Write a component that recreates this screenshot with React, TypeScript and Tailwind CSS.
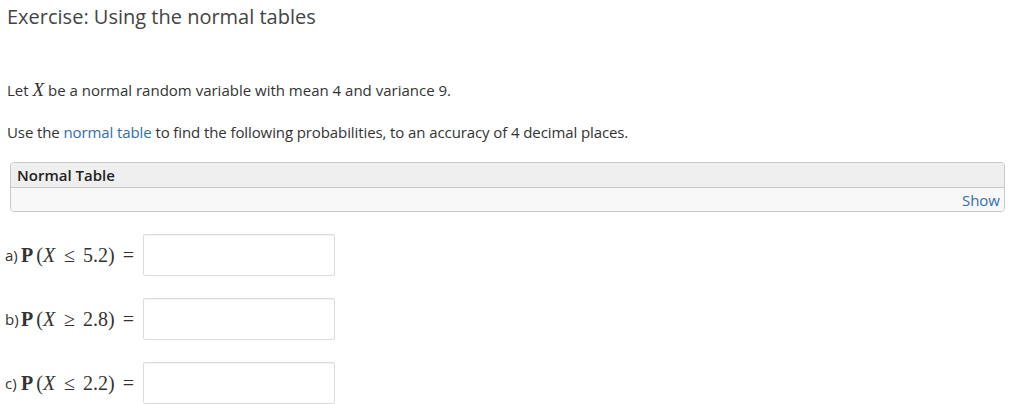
const questions = [
  { label: "a)", rel: "≤", value: "5.2" },
  { label: "b)", rel: "≥", value: "2.8" },
  { label: "c)", rel: "≤", value: "2.2" },
];

const Math = ({ rel, value }: { rel: string; value: string }) => (
  <span className="font-['Liberation_Serif',serif] text-[20px] text-[#333] whitespace-nowrap">
    <b className="mr-[3px]">P</b>(<i className="mr-[1px]">X</i>
    <span className="mx-[8px]">{rel}</span>
    {value})<span className="ml-[8px]">=</span>
  </span>
);

export default function App() {
  return (
    <div className="font-['Open_Sans',sans-serif] text-[15px] leading-[20px] text-[#333] bg-white min-h-[404px] pl-[7px] pr-[19px]">
      <h1 className="pt-[3px] text-[20px] leading-[28px] text-[#444]">Exercise: Using the normal tables</h1>

      <p className="mt-[49px]">
        Let <i className="font-['Liberation_Serif',serif] text-[19px]">X</i> be a normal random variable with mean 4 and variance 9.
      </p>
      <p className="mt-[22px] tracking-[-0.1px]">
        Use the <a className="text-[#2f6fad]">normal table</a> to find the following probabilities, to an accuracy of 4 decimal places.
      </p>

      <div className="mt-[20px] ml-[3px] border border-[#c8c8c8] rounded-[4px] overflow-hidden">
        <div className="bg-[#efefef] border-b border-[#c8c8c8] h-[25px] px-[6px] flex items-center text-[15px] font-semibold text-[#222]">
          Normal Table
        </div>
        <div className="bg-[#f8f8f8] h-[23px] px-[4px] flex items-center justify-end text-[#2f6fad]">Show</div>
      </div>

      <div className="mt-[22px] -ml-[2px] flex flex-col gap-[22px]">
        {questions.map((q) => (
          <div key={q.label} className="flex items-center">
            <span className="w-[16px]">{q.label}</span>
            <Math rel={q.rel} value={q.value} />
            <div className="ml-[9px] w-[192px] h-[42px] border border-[#dcdcdc] rounded-[2px] bg-white shadow-[inset_0_1px_1px_rgba(0,0,0,0.05)]" />
          </div>
        ))}
      </div>
    </div>
  );
}
